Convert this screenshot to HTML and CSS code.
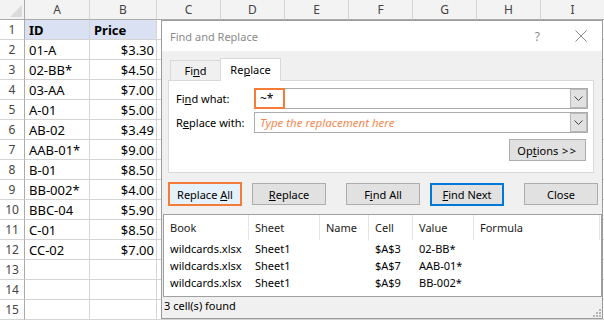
FILE: index.html
```html
<!DOCTYPE html>
<html>
<head>
<meta charset="utf-8">
<title>Find and Replace</title>
<link rel="stylesheet" href="styles.css">
</head>
<body>
<div class="sheet">
  <div class="c corner"><span class="tri"></span></div>
  <div class="c ch">A</div><div class="c ch">B</div><div class="c ch">C</div><div class="c ch">D</div><div class="c ch">E</div><div class="c ch">F</div><div class="c ch">G</div><div class="c ch">H</div><div class="c ch">I</div>

  <div class="c rh">1</div><div class="c hd">ID</div><div class="c hd">Price</div><div class="c fill"></div>
  <div class="c rh">2</div><div class="c">01-A</div><div class="c num">$3.30</div><div class="c fill"></div>
  <div class="c rh">3</div><div class="c">02-BB*</div><div class="c num">$4.50</div><div class="c fill"></div>
  <div class="c rh">4</div><div class="c">03-AA</div><div class="c num">$7.00</div><div class="c fill"></div>
  <div class="c rh">5</div><div class="c">A-01</div><div class="c num">$5.00</div><div class="c fill"></div>
  <div class="c rh">6</div><div class="c">AB-02</div><div class="c num">$3.49</div><div class="c fill"></div>
  <div class="c rh">7</div><div class="c">AAB-01*</div><div class="c num">$9.00</div><div class="c fill"></div>
  <div class="c rh">8</div><div class="c">B-01</div><div class="c num">$8.50</div><div class="c fill"></div>
  <div class="c rh">9</div><div class="c">BB-002*</div><div class="c num">$4.00</div><div class="c fill"></div>
  <div class="c rh">10</div><div class="c">BBC-04</div><div class="c num">$5.90</div><div class="c fill"></div>
  <div class="c rh">11</div><div class="c">C-01</div><div class="c num">$8.50</div><div class="c fill"></div>
  <div class="c rh">12</div><div class="c">CC-02</div><div class="c num">$7.00</div><div class="c fill"></div>
  <div class="c rh">13</div><div class="c"></div><div class="c"></div><div class="c fill"></div>
  <div class="c rh">14</div><div class="c"></div><div class="c"></div><div class="c fill"></div>
  <div class="c rh">15</div><div class="c"></div><div class="c"></div><div class="c fill"></div>
</div>

<div class="dlg">
  <div class="tbar">
    <span class="ttl">Find and Replace</span>
    <span class="help">?</span>
    <span class="close-x"><svg width="12" height="12" viewBox="0 0 12 12"><path d="M0.5 0.5L11.5 11.5M11.5 0.5L0.5 11.5" stroke="#8a8a8a" stroke-width="1" fill="none"/></svg></span>
  </div>
  <div class="tabs">
    <div class="tab"><span>Fi<u>n</u>d</span></div>
    <div class="tab on"><span>Re<u>p</u>lace</span></div>
  </div>
  <div class="panel">
    <div class="frow">
      <span class="lbl">Fi<u>n</u>d what:</span>
      <div class="inp"><span class="hl">~*</span><span class="sp"></span><span class="dd"><svg width="9" height="5" viewBox="0 0 9 5"><path d="M0.5 0.5L4.5 4.5L8.5 0.5" stroke="#444" stroke-width="1" fill="none"/></svg></span></div>
    </div>
    <div class="frow">
      <span class="lbl">R<u>e</u>place with:</span>
      <div class="inp"><span class="ph">Type the replacement here</span><span class="dd"><svg width="9" height="5" viewBox="0 0 9 5"><path d="M0.5 0.5L4.5 4.5L8.5 0.5" stroke="#444" stroke-width="1" fill="none"/></svg></span></div>
    </div>
    <div class="optrow"><span class="btn opt"><span>Op<u>t</u>ions <span class="gt">&gt;&gt;</span></span></span></div>
  </div>
  <div class="btns">
    <span class="btn rall"><span>Replace <u>A</u>ll</span></span>
    <span class="btn g10"><span><u>R</u>eplace</span></span>
    <span class="btn g20"><span>F<u>i</u>nd All</span></span>
    <span class="btn g10 fnext"><span><u>F</u>ind Next</span></span>
    <span class="btn g20"><span>Close</span></span>
  </div>
  <div class="list">
    <div class="lh">Book</div><div class="lh">Sheet</div><div class="lh">Name</div><div class="lh">Cell</div><div class="lh">Value</div><div class="lh">Formula</div>
    <div class="ld">wildcards.xlsx</div><div class="ld">Sheet1</div><div class="ld"></div><div class="ld">$A$3</div><div class="ld">02-BB*</div><div class="ld"></div>
    <div class="ld">wildcards.xlsx</div><div class="ld">Sheet1</div><div class="ld"></div><div class="ld">$A$7</div><div class="ld">AAB-01*</div><div class="ld"></div>
    <div class="ld">wildcards.xlsx</div><div class="ld">Sheet1</div><div class="ld"></div><div class="ld">$A$9</div><div class="ld">BB-002*</div><div class="ld"></div>
  </div>
  <div class="status">
    <span>3 cell(s) found</span>
    <svg class="grip" width="9" height="9" viewBox="0 0 9 9"><g fill="#b4b4b4"><rect x="7" y="1" width="2" height="2"/><rect x="4" y="4" width="2" height="2"/><rect x="7" y="4" width="2" height="2"/><rect x="1" y="7" width="2" height="2"/><rect x="4" y="7" width="2" height="2"/><rect x="7" y="7" width="2" height="2"/></g></svg>
  </div>
</div>
</body>
</html>
```

FILE: styles.css
```css
body {
  margin: 0;
  width: 604px;
  height: 320px;
  overflow: hidden;
  position: relative;
  background: #fff;
  font-family: "Noto Sans", sans-serif;
  color: #000;
}

.sheet {
  display: grid;
  grid-template-columns: 25px 65px 67px repeat(7, 64px);
  grid-auto-rows: 20px;
  font-size: 13px;
}

.c {
  box-sizing: border-box;
  border-right: 1px solid #d4d4d4;
  border-bottom: 1px solid #d4d4d4;
  display: flex;
  align-items: center;
  padding: 0 4px;
  white-space: nowrap;
  overflow: hidden;
}

.corner {
  position: relative;
  background: #f3f3f3;
  border-right-color: #ababab;
  border-bottom-color: #ababab;
}

.tri {
  position: absolute;
  right: 2px;
  bottom: 2px;
  width: 0;
  height: 0;
  border-left: 12px solid transparent;
  border-bottom: 12px solid #dadada;
}

.ch {
  background: #f3f3f3;
  justify-content: center;
  color: #444;
  font-size: 12px;
  border-bottom-color: #ababab;
}

.rh {
  justify-content: center;
  padding: 0;
  color: #444;
  font-size: 12px;
  border-right-color: #ababab;
}

.hd {
  background: #d9e1f2;
  font-weight: bold;
}

.num {
  justify-content: flex-end;
  padding-right: 2px;
}

.fill {
  grid-column: 4 / span 7;
  border-right: none;
}

/* dialog */
.dlg {
  position: absolute;
  left: 161px;
  top: 20px;
  width: 442px;
  height: 299px;
  box-sizing: border-box;
  border: 1px solid #9b9b9b;
  background: #f0f0f0;
  display: flex;
  flex-direction: column;
  font-size: 11px;
  color: #000;
}

.tbar {
  height: 30px;
  flex: none;
  background: #fff;
  display: flex;
  align-items: center;
  padding-left: 8px;
  color: #8a8a8a;
}

.ttl { font-size: 11px; }

.help {
  margin-left: auto;
  font-size: 12px;
  color: #8a8a8a;
}

.close-x {
  display: flex;
  margin-left: 35px;
  margin-right: 15px;
}

.tabs {
  display: flex;
  align-items: flex-end;
  height: 22px;
  margin-top: 7px;
  padding-left: 8px;
  flex: none;
}

.tab {
  width: 50px;
  height: 20px;
  box-sizing: border-box;
  border-top: 1px solid #d9d9d9;
  border-left: 1px solid #d9d9d9;
  display: flex;
  align-items: center;
  justify-content: center;
}

.tab.on {
  width: 61px;
  height: 23px;
  margin-bottom: -1px;
  background: #fff;
  border-right: 1px solid #d9d9d9;
  position: relative;
  z-index: 1;
  padding-bottom: 1px;
}

.panel {
  flex: none;
  margin: 0 8px 0 6px;
  height: 93px;
  box-sizing: border-box;
  border: 1px solid #d9d9d9;
  background: #fff;
  padding: 7px 5px 0 7px;
}

.frow {
  display: flex;
  align-items: center;
  height: 21px;
  margin-bottom: 3px;
}

.lbl {
  width: 78px;
  flex: none;
}

.inp {
  flex: 1;
  height: 21px;
  box-sizing: border-box;
  border: 1px solid #acacac;
  display: flex;
  align-items: stretch;
}

.hl {
  width: 31px;
  box-sizing: border-box;
  margin: -1px 0 -1px -1px;
  border: 2px solid #f47b38;
  display: flex;
  align-items: center;
  padding-left: 4px;
  font-size: 12px;
}

.sp { flex: 1; }

.ph {
  flex: 1;
  display: flex;
  align-items: center;
  padding-left: 5px;
  font-style: italic;
  color: #f5884f;
  font-size: 11.5px;
}

.dd {
  width: 17px;
  box-sizing: border-box;
  border: 1px solid #b9b9b9;
  background: #e1e1e1;
  display: flex;
  align-items: center;
  justify-content: center;
}

.optrow {
  display: flex;
  justify-content: flex-end;
  margin-top: 6px;
  padding-right: 2px;
}

.btn {
  width: 74px;
  height: 22px;
  box-sizing: border-box;
  border: 1px solid #adadad;
  background: #e1e1e1;
  display: flex;
  align-items: center;
  justify-content: center;
  flex: none;
  white-space: nowrap;
}

.opt { width: 77px; }

.gt { letter-spacing: 1.5px; margin-left: 1px; }

.btns {
  flex: none;
  display: flex;
  align-items: center;
  height: 24px;
  margin-top: 9px;
  padding-left: 6px;
}

.rall {
  height: 24px;
  border: 2px solid #f47b38;
  background: #e5f1fb;
}

.g10 { margin-left: 10px; }
.g20 { margin-left: 20px; }

.fnext {
  height: 23px;
  border: 2px solid #0078d7;
}

.list {
  flex: none;
  margin: 8px 0 0 1px;
  width: 439px;
  height: 83px;
  box-sizing: border-box;
  border: 1px solid #a0a0a0;
  background: #fff;
  display: grid;
  grid-template-columns: 85px 71px 49px 44px 61px 126px;
  grid-template-rows: 25px 17px 17px 17px;
  align-content: start;
}

.lh {
  border-right: 1px solid #e5e5e5;
  display: flex;
  align-items: center;
  padding-left: 6px;
  color: #1a1a1a;
  white-space: nowrap;
}

.ld {
  display: flex;
  align-items: center;
  padding-left: 6px;
  white-space: nowrap;
}

.status {
  flex: 1;
  position: relative;
  padding: 1px 0 0 2px;
  line-height: 15px;
}

.grip {
  position: absolute;
  right: 1px;
  bottom: 1px;
}
```
